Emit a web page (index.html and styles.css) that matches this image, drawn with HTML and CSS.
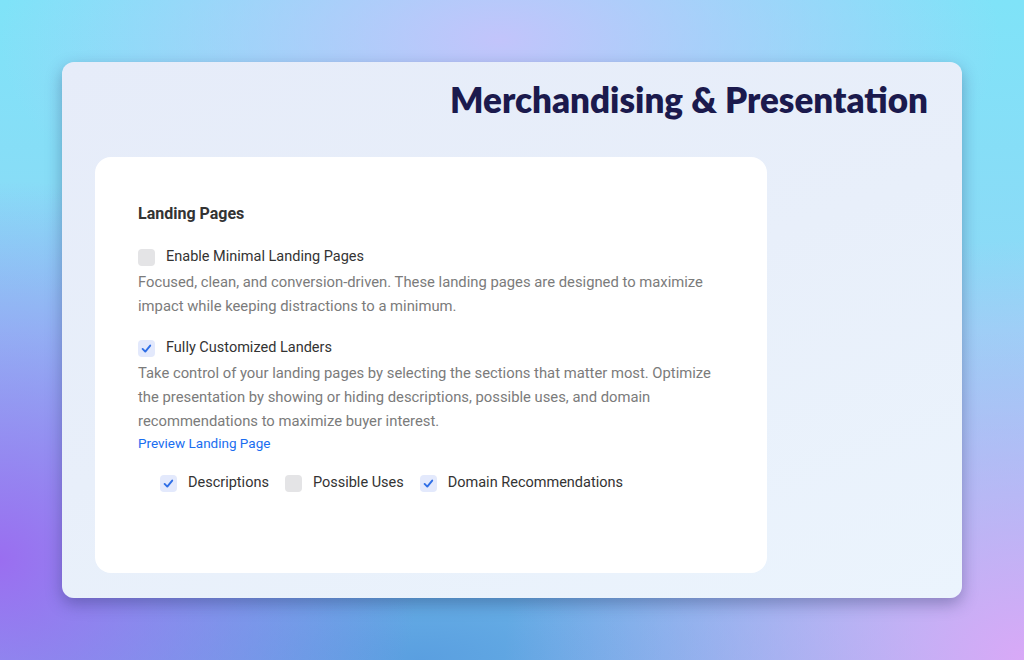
FILE: index.html
```html
<!DOCTYPE html>
<html lang="en">
<head>
    <meta charset="UTF-8">
    <title>Merchandising &amp; Presentation</title>
    <link rel="stylesheet" href="styles.css">
</head>
<body>

    <!-- Settings Panel -->
    <main class="panel">
        <h1 class="panel-title">Merchandising &amp; Presentation</h1>

        <section class="card">
            <h3>Landing Pages</h3>

            <div class="option">
                <label class="check-row">
                    <span class="box"></span>
                    <span>Enable Minimal Landing Pages</span>
                </label>
                <p class="desc">Focused, clean, and conversion-driven. These landing pages are designed to maximize impact while keeping distractions to a minimum.</p>
            </div>

            <div class="option">
                <label class="check-row">
                    <span class="box checked"><svg viewBox="0 0 17 17"><path d="M4.6 8.9 L7.3 11.6 L12.2 5.6"/></svg></span>
                    <span>Fully Customized Landers</span>
                </label>
                <p class="desc">Take control of your landing pages by selecting the sections that matter most. Optimize the presentation by showing or hiding descriptions, possible uses, and domain recommendations to maximize buyer interest.</p>
                <a href="#" class="preview-link">Preview Landing Page</a>
            </div>

            <div class="sections">
                <label class="check-row">
                    <span class="box checked"><svg viewBox="0 0 17 17"><path d="M4.6 8.9 L7.3 11.6 L12.2 5.6"/></svg></span>
                    <span>Descriptions</span>
                </label>
                <label class="check-row">
                    <span class="box"></span>
                    <span>Possible Uses</span>
                </label>
                <label class="check-row">
                    <span class="box checked"><svg viewBox="0 0 17 17"><path d="M4.6 8.9 L7.3 11.6 L12.2 5.6"/></svg></span>
                    <span>Domain Recommendations</span>
                </label>
            </div>
        </section>
    </main>

</body>
</html>
```

FILE: styles.css
```css
/* Page background */
html, body {
    height: 100%;
}

body {
    margin: 0;
    padding: 62px;
    box-sizing: border-box;
    font-family: Roboto, "Open Sans", sans-serif;
    color: #333;
    background:
        radial-gradient(ellipse 520px 420px at 1024px 660px, #d9a9f7 0%, rgba(217, 169, 247, 0) 100%),
        radial-gradient(ellipse 420px 380px at 0 560px, #9a6ef0 0%, rgba(154, 110, 240, 0) 100%),
        radial-gradient(ellipse 500px 200px at 420px 660px, #5a9fe0 0%, rgba(90, 159, 224, 0) 100%),
        radial-gradient(ellipse 500px 240px at 500px 40px, #c2c4fb 0%, rgba(194, 196, 251, 0) 100%),
        linear-gradient(180deg, #7fe3f8 0%, #8fd8f6 50%, #79c6ee 100%);
}

/* Outer panel */
.panel {
    width: 900px;
    height: 536px;
    box-sizing: border-box;
    padding: 17px 34px 25px 33px;
    border-radius: 12px;
    background: linear-gradient(160deg, #e6ecf9 0%, #e8effa 50%, #ebf4fd 100%);
    box-shadow: 0 6px 16px rgba(30, 40, 90, 0.35);
}

.panel-title {
    margin: 0;
    text-align: right;
    font-family: Lato, sans-serif;
    font-weight: 800;
    font-size: 35px;
    line-height: 40px;
    color: #1b1a4d;
}

/* Inner card */
.card {
    width: 672px;
    height: 416px;
    margin-top: 38px;
    box-sizing: border-box;
    padding: 47px 43px;
    background: #fff;
    border-radius: 16px;
}

.card h3 {
    margin: 0 0 23px;
    font-size: 16px;
    line-height: 20px;
    font-weight: 700;
    color: #333;
}

.option {
    margin-bottom: 20px;
}

.check-row {
    display: flex;
    align-items: center;
    gap: 11px;
    font-size: 14.5px;
    line-height: 20px;
    color: #333;
}

.box {
    width: 17px;
    height: 17px;
    flex-shrink: 0;
    border-radius: 4px;
    background: #e4e4e6;
}

.box.checked {
    background: #e3e9fc;
}

.box svg {
    display: block;
    width: 17px;
    height: 17px;
    fill: none;
    stroke: #2f6fe6;
    stroke-width: 1.9;
    stroke-linecap: round;
    stroke-linejoin: round;
}

.desc {
    margin: 3px 0 0;
    font-size: 14.8px;
    line-height: 24px;
    color: #7b7b7b;
}

.preview-link {
    display: block;
    font-size: 13.5px;
    line-height: 20px;
    color: #1a6ef0;
    text-decoration: none;
}

.sections {
    display: flex;
    gap: 16px;
    margin-top: 4px;
    padding-left: 22px;
}
```
